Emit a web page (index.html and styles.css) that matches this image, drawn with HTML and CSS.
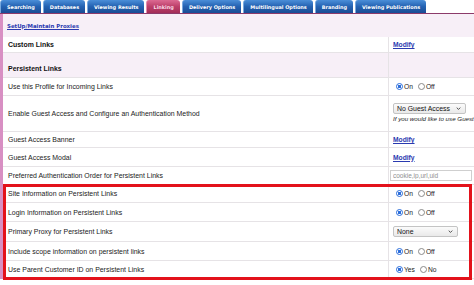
FILE: index.html
```html
<!DOCTYPE html>
<html>
<head>
<meta charset="utf-8">
<link rel="stylesheet" href="styles.css">
</head>
<body>
<nav class="tabs">
  <span class="tab">Searching</span>
  <span class="tab">Databases</span>
  <span class="tab">Viewing Results</span>
  <span class="tab tab-active">Linking</span>
  <span class="tab">Delivery Options</span>
  <span class="tab">Multilingual Options</span>
  <span class="tab">Branding</span>
  <span class="tab">Viewing Publications</span>
</nav>
<div class="panel">
  <div class="panel-head"><a class="proxy-link" href="#">SetUp/Maintain Proxies</a></div>

  <div class="row row-custom">
    <div class="label strong">Custom Links</div>
    <div class="value"><a class="modify" href="#">Modify</a></div>
  </div>
  <div class="row row-section">
    <div class="label strong">Persistent Links</div>
    <div class="value"></div>
  </div>
  <div class="row h18">
    <div class="label">Use this Profile for Incoming Links</div>
    <div class="value"><label class="opt"><input type="radio" name="p1" checked>On</label><label class="opt"><input type="radio" name="p1">Off</label></div>
  </div>
  <div class="row row-guest">
    <div class="label">Enable Guest Access and Configure an Authentication Method</div>
    <div class="value value-stack">
      <span class="select-wrap w-guest"><select class="select"><option>No Guest Access</option></select><svg class="chev" viewBox="0 0 8 5" width="5" height="3"><path d="M1 1l3 3 3-3" fill="none" stroke="#333" stroke-width="1.4"/></svg></span>
      <span class="hint">If you would like to use Guest Access</span>
    </div>
  </div>
  <div class="row h16">
    <div class="label">Guest Access Banner</div>
    <div class="value"><a class="modify" href="#">Modify</a></div>
  </div>
  <div class="row h19">
    <div class="label">Guest Access Modal</div>
    <div class="value"><a class="modify" href="#">Modify</a></div>
  </div>
  <div class="row h18">
    <div class="label">Preferred Authentication Order for Persistent Links</div>
    <div class="value value-input"><input class="text" type="text" placeholder="cookie,ip,url,uid"></div>
  </div>

  <div class="group">
    <div class="row h18">
      <div class="label">Site Information on Persistent Links</div>
      <div class="value"><label class="opt"><input type="radio" name="p2" checked>On</label><label class="opt"><input type="radio" name="p2">Off</label></div>
    </div>
    <div class="row h19">
      <div class="label">Login Information on Persistent Links</div>
      <div class="value"><label class="opt"><input type="radio" name="p3" checked>On</label><label class="opt"><input type="radio" name="p3">Off</label></div>
    </div>
    <div class="row h20">
      <div class="label">Primary Proxy for Persistent Links</div>
      <div class="value"><span class="select-wrap w-none"><select class="select"><option>None</option></select><svg class="chev" viewBox="0 0 8 5" width="5" height="3"><path d="M1 1l3 3 3-3" fill="none" stroke="#333" stroke-width="1.4"/></svg></span></div>
    </div>
    <div class="row h19">
      <div class="label">Include scope information on persistent links</div>
      <div class="value"><label class="opt"><input type="radio" name="p4" checked>On</label><label class="opt"><input type="radio" name="p4">Off</label></div>
    </div>
    <div class="row h18">
      <div class="label">Use Parent Customer ID on Persistent Links</div>
      <div class="value"><label class="opt"><input type="radio" name="p5" checked>Yes</label><label class="opt"><input type="radio" name="p5">No</label></div>
    </div>
  </div>
</div>
</body>
</html>
```

FILE: styles.css
```css
html, body {
  margin: 0;
  padding: 0;
  background: #ffffff;
  overflow: hidden;
  width: 474px;
  height: 285px;
}

body {
  font-family: "Liberation Sans", Arial, sans-serif;
  color: #222;
}

.tabs {
  display: flex;
  align-items: flex-end;
  gap: 2px;
  height: 13px;
  border-bottom: 1px solid #8c3a6a;
  box-sizing: content-box;
}

.tab {
  height: 13px;
  box-sizing: border-box;
  padding: 0 6px;
  display: flex;
  align-items: center;
  font-family: "DejaVu Sans", Verdana, sans-serif;
  font-weight: bold;
  font-size: 4.95px;
  color: #ffffff;
  background: linear-gradient(#4a8ed8, #2462b2 50%, #1a4c94);
  border-radius: 3px 3px 0 0;
  white-space: nowrap;
  border-left: 1px solid #76a8de;
}

.tab-active {
  background: linear-gradient(#dc6a92, #bd3f6a 50%, #a32e58);
  color: #fbdbe6;
  border-left-color: #e58aab;
}

.panel {
  border-left: 3px solid #d88fc3;
  background: #f7eff7;
}

.panel-head {
  height: 23px;
  padding-left: 4px;
  display: flex;
  align-items: center;
  box-sizing: border-box;
}

.proxy-link {
  font-family: "DejaVu Sans", Verdana, sans-serif;
  font-weight: bold;
  font-size: 5.45px;
  color: #2a3ab0;
  text-decoration: underline;
}

.row {
  display: grid;
  grid-template-columns: 385px 86px;
  box-sizing: border-box;
  border-bottom: 1px solid #e6e3e6;
  background: #ffffff;
  font-size: 6.95px;
}

.label {
  display: flex;
  align-items: center;
  padding-left: 5px;
  white-space: nowrap;
}

.strong {
  font-weight: bold;
  color: #111;
}

.value {
  display: flex;
  align-items: center;
  padding-left: 4px;
  border-left: 1px solid #e6e3e6;
  white-space: nowrap;
  min-width: 0;
  font-size: 6.7px;
}

.row-custom { height: 16px; }
.row-section {
  height: 25px;
  background: #f7eff7;
}
.row-section .label {
  align-items: flex-end;
  padding-bottom: 5px;
}
.row-guest { height: 36px; }
.h16 { height: 16px; }
.h18 { height: 18px; }
.h19 { height: 19px; }
.h20 { height: 20px; }

.modify {
  font-weight: bold;
  color: #2a3ab0;
  text-decoration: underline;
}

.opt {
  display: inline-flex;
  align-items: center;
  margin-right: 2px;
  margin-left: 3px;
}
.opt + .opt { margin-left: 3px; }

.opt input {
  -webkit-appearance: none;
  appearance: none;
  width: 7px;
  height: 7px;
  margin: 0 1px 0 0;
  border: 1px solid #8a8a8a;
  border-radius: 50%;
  background: #fff;
  box-sizing: border-box;
}

.opt input:checked {
  border-color: #2a6ddb;
  background: radial-gradient(circle, #2a6ddb 0 1.4px, #ffffff 1.9px);
}

.value-stack {
  flex-direction: column;
  align-items: flex-start;
  justify-content: center;
  gap: 1px;
  padding-bottom: 3px;
  box-sizing: border-box;
}

.select-wrap {
  position: relative;
  display: inline-block;
  height: 11px;
}

.w-guest { width: 73px; }
.w-none { width: 65px; }

.select {
  -webkit-appearance: none;
  appearance: none;
  width: 100%;
  height: 11px;
  box-sizing: border-box;
  padding: 0 0 0 3px;
  margin: 0;
  font-family: "Liberation Sans", Arial, sans-serif;
  font-size: 6.9px;
  line-height: 9px;
  color: #111;
  border: 1px solid #c4c4c4;
  border-radius: 2px;
  background: linear-gradient(#fbfbfb, #e9e9e9);
}

.chev {
  position: absolute;
  right: 5px;
  top: 4px;
}

.hint {
  font-style: italic;
  font-size: 6.2px;
  color: #222;
  white-space: nowrap;
}

.value-input { padding-left: 1px; }

.text {
  width: 82px;
  height: 11px;
  box-sizing: border-box;
  margin: 0;
  padding: 0 2px;
  border: 1px solid #cfcfcf;
  font-family: "Liberation Sans", Arial, sans-serif;
  font-size: 6.5px;
  color: #333;
  background: #fff;
}
.text::placeholder { color: #8f8f8f; }

.group {
  position: relative;
}

.group::after {
  content: "";
  position: absolute;
  left: 0;
  right: 2px;
  top: -1px;
  bottom: -1px;
  border: 3px solid #e3121b;
  pointer-events: none;
}
```
